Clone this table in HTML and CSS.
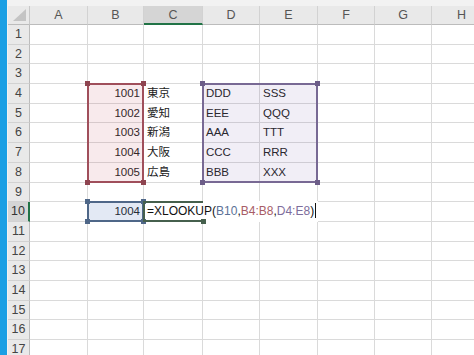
FILE: index.html
```html
<!DOCTYPE html>
<html lang="ja">
<head>
<meta charset="UTF-8">
<meta name="viewport" content="width=device-width, initial-scale=1.0">
<title>XLOOKUP</title>
<link rel="stylesheet" href="styles.css">
</head>
<body>

<div class="app">
    <div class="edge"></div>
    <div class="sheet">
        <div class="layer cells" id="cells"></div>
        <div class="layer marks">
            <div class="editor">=XLOOKUP(<span class="ref-1">B10</span>,<span class="ref-2">B4:B8</span>,<span class="ref-3">D4:E8</span>)<span class="caret"></span></div>
            <div class="range range-2"><i class="h tl"></i><i class="h tr"></i><i class="h bl"></i><i class="h br"></i></div>
            <div class="range range-3"><i class="h tl"></i><i class="h tr"></i><i class="h bl"></i><i class="h br"></i></div>
            <div class="range range-1"><i class="h tl"></i><i class="h tr"></i><i class="h bl"></i><i class="h br"></i></div>
            <div class="active"><i class="fill-handle"></i></div>
        </div>
    </div>
</div>

<script>
const cols = ['A', 'B', 'C', 'D', 'E', 'F', 'G', 'H'];
const rowCount = 17;
const activeCol = 'C';
const activeRow = 10;

const data = {
    4: { B: '1001', C: '東京', D: 'DDD', E: 'SSS' },
    5: { B: '1002', C: '愛知', D: 'EEE', E: 'QQQ' },
    6: { B: '1003', C: '新潟', D: 'AAA', E: 'TTT' },
    7: { B: '1004', C: '大阪', D: 'CCC', E: 'RRR' },
    8: { B: '1005', C: '広島', D: 'BBB', E: 'XXX' },
    10: { B: '1004' }
};

const grid = document.getElementById('cells');

function add(cls, text) {
    const el = document.createElement('div');
    el.className = cls;
    if (text) el.textContent = text;
    grid.appendChild(el);
}

// header row
add('corner');
cols.forEach(c => add('col-head' + (c === activeCol ? ' on' : ''), c));

// body rows
for (let r = 1; r <= rowCount; r++) {
    add('row-head' + (r === activeRow ? ' on' : ''), String(r));
    cols.forEach(c => {
        const v = (data[r] || {})[c] || '';
        const num = v !== '' && !isNaN(v);
        add('cell' + (num ? ' num' : ''), v);
    });
}
</script>

</body>
</html>
```

FILE: styles.css
```css
body {
    margin: 0;
    background-color: #f2f2f2;
    font-family: "Liberation Sans", "Noto Sans CJK JP", sans-serif;
    overflow: hidden;
}

.app {
    display: flex;
    height: 355px;
}

.edge {
    width: 7px;
    flex: none;
    background-color: #1a9fe4;
    margin-right: 1px;
}

.sheet {
    --cols: 22px 58px 56px 59px 57px 58px 57px 57px 60px;
    --rows: 19px repeat(17, 19.7px);
    display: grid;
    margin-top: 6px;
    background-color: #fff;
}

.layer {
    grid-area: 1 / 1;
    display: grid;
    grid-template-columns: var(--cols);
    grid-template-rows: var(--rows);
}

.cells > div {
    box-sizing: border-box;
    border-right: 1px solid #dadada;
    border-bottom: 1px solid #dadada;
    font-size: 11.5px;
    color: #222;
    line-height: 19px;
    padding: 0 3px;
    white-space: nowrap;
    overflow: hidden;
}

.cells .num {
    text-align: right;
}

.corner,
.col-head,
.row-head {
    background-color: #e9e9e9;
    color: #555 !important;
    font-size: 12.5px !important;
    text-align: center;
}

.cells .corner {
    position: relative;
    border-right-color: #c8c8c8;
    border-bottom-color: #bcbcbc;
}

.corner::after {
    content: "";
    position: absolute;
    right: 3px;
    bottom: 3px;
    border-style: solid;
    border-width: 0 0 12px 13px;
    border-color: transparent transparent #c4c4c4 transparent;
}

.cells .col-head {
    border-right-color: #d2d2d2;
    border-bottom-color: #bcbcbc;
    line-height: 18px;
}

.cells .row-head {
    border-right-color: #bcbcbc;
    border-bottom-color: #d2d2d2;
    padding: 0;
    color: #444 !important;
}

.cells .col-head.on {
    background-color: #d5d5d5;
    border-bottom: 2px solid #217346;
}

.cells .row-head.on {
    background-color: #d5d5d5;
    border-right: 2px solid #217346;
    color: #333 !important;
}

/* highlight boxes drawn over the cells */
.marks > div {
    box-sizing: border-box;
    position: relative;
}

.editor {
    grid-row: 11;
    grid-column: 4 / 7;
    background-color: #fff;
    margin-top: -1px;
    padding-left: 3px;
    font-size: 12px;
    line-height: 20px;
    color: #111;
    white-space: nowrap;
}

.ref-1 { color: #5a7196; }
.ref-2 { color: #a85c66; }
.ref-3 { color: #7e6d9c; }

.caret {
    display: inline-block;
    width: 1px;
    height: 15px;
    background-color: #111;
    vertical-align: -3px;
    margin-left: 1px;
}

.range {
    border: 2px solid;
    margin: -1px 0 0 -1px;
}

.range-1 {
    grid-row: 11;
    grid-column: 3;
    border-color: #4f6788;
    background-color: rgba(70, 110, 180, 0.15);
}

.range-2 {
    grid-row: 5 / 10;
    grid-column: 3;
    border-color: #a04f5b;
    background-color: rgba(200, 80, 100, 0.12);
}

.range-3 {
    grid-row: 5 / 10;
    grid-column: 5 / 7;
    border-color: #786994;
    background-color: rgba(120, 90, 170, 0.1);
}

.h {
    position: absolute;
    width: 5px;
    height: 5px;
}

.range-1 .h { background-color: #4f6788; }
.range-2 .h { background-color: #8e4450; }
.range-3 .h { background-color: #6c5d88; }

.tl { left: -4px; top: -4px; }
.tr { right: -4px; top: -4px; }
.bl { left: -4px; bottom: -4px; }
.br { right: -4px; bottom: -4px; }

.active {
    grid-row: 11;
    grid-column: 4;
    margin: -1px 0 0 -1px;
    border-top: 2px solid #46604d;
    border-bottom: 2px solid #46604d;
    border-left: 2px solid #46604d;
}

.fill-handle {
    position: absolute;
    right: -3px;
    bottom: -4px;
    width: 5px;
    height: 5px;
    background-color: #46604d;
}
```
